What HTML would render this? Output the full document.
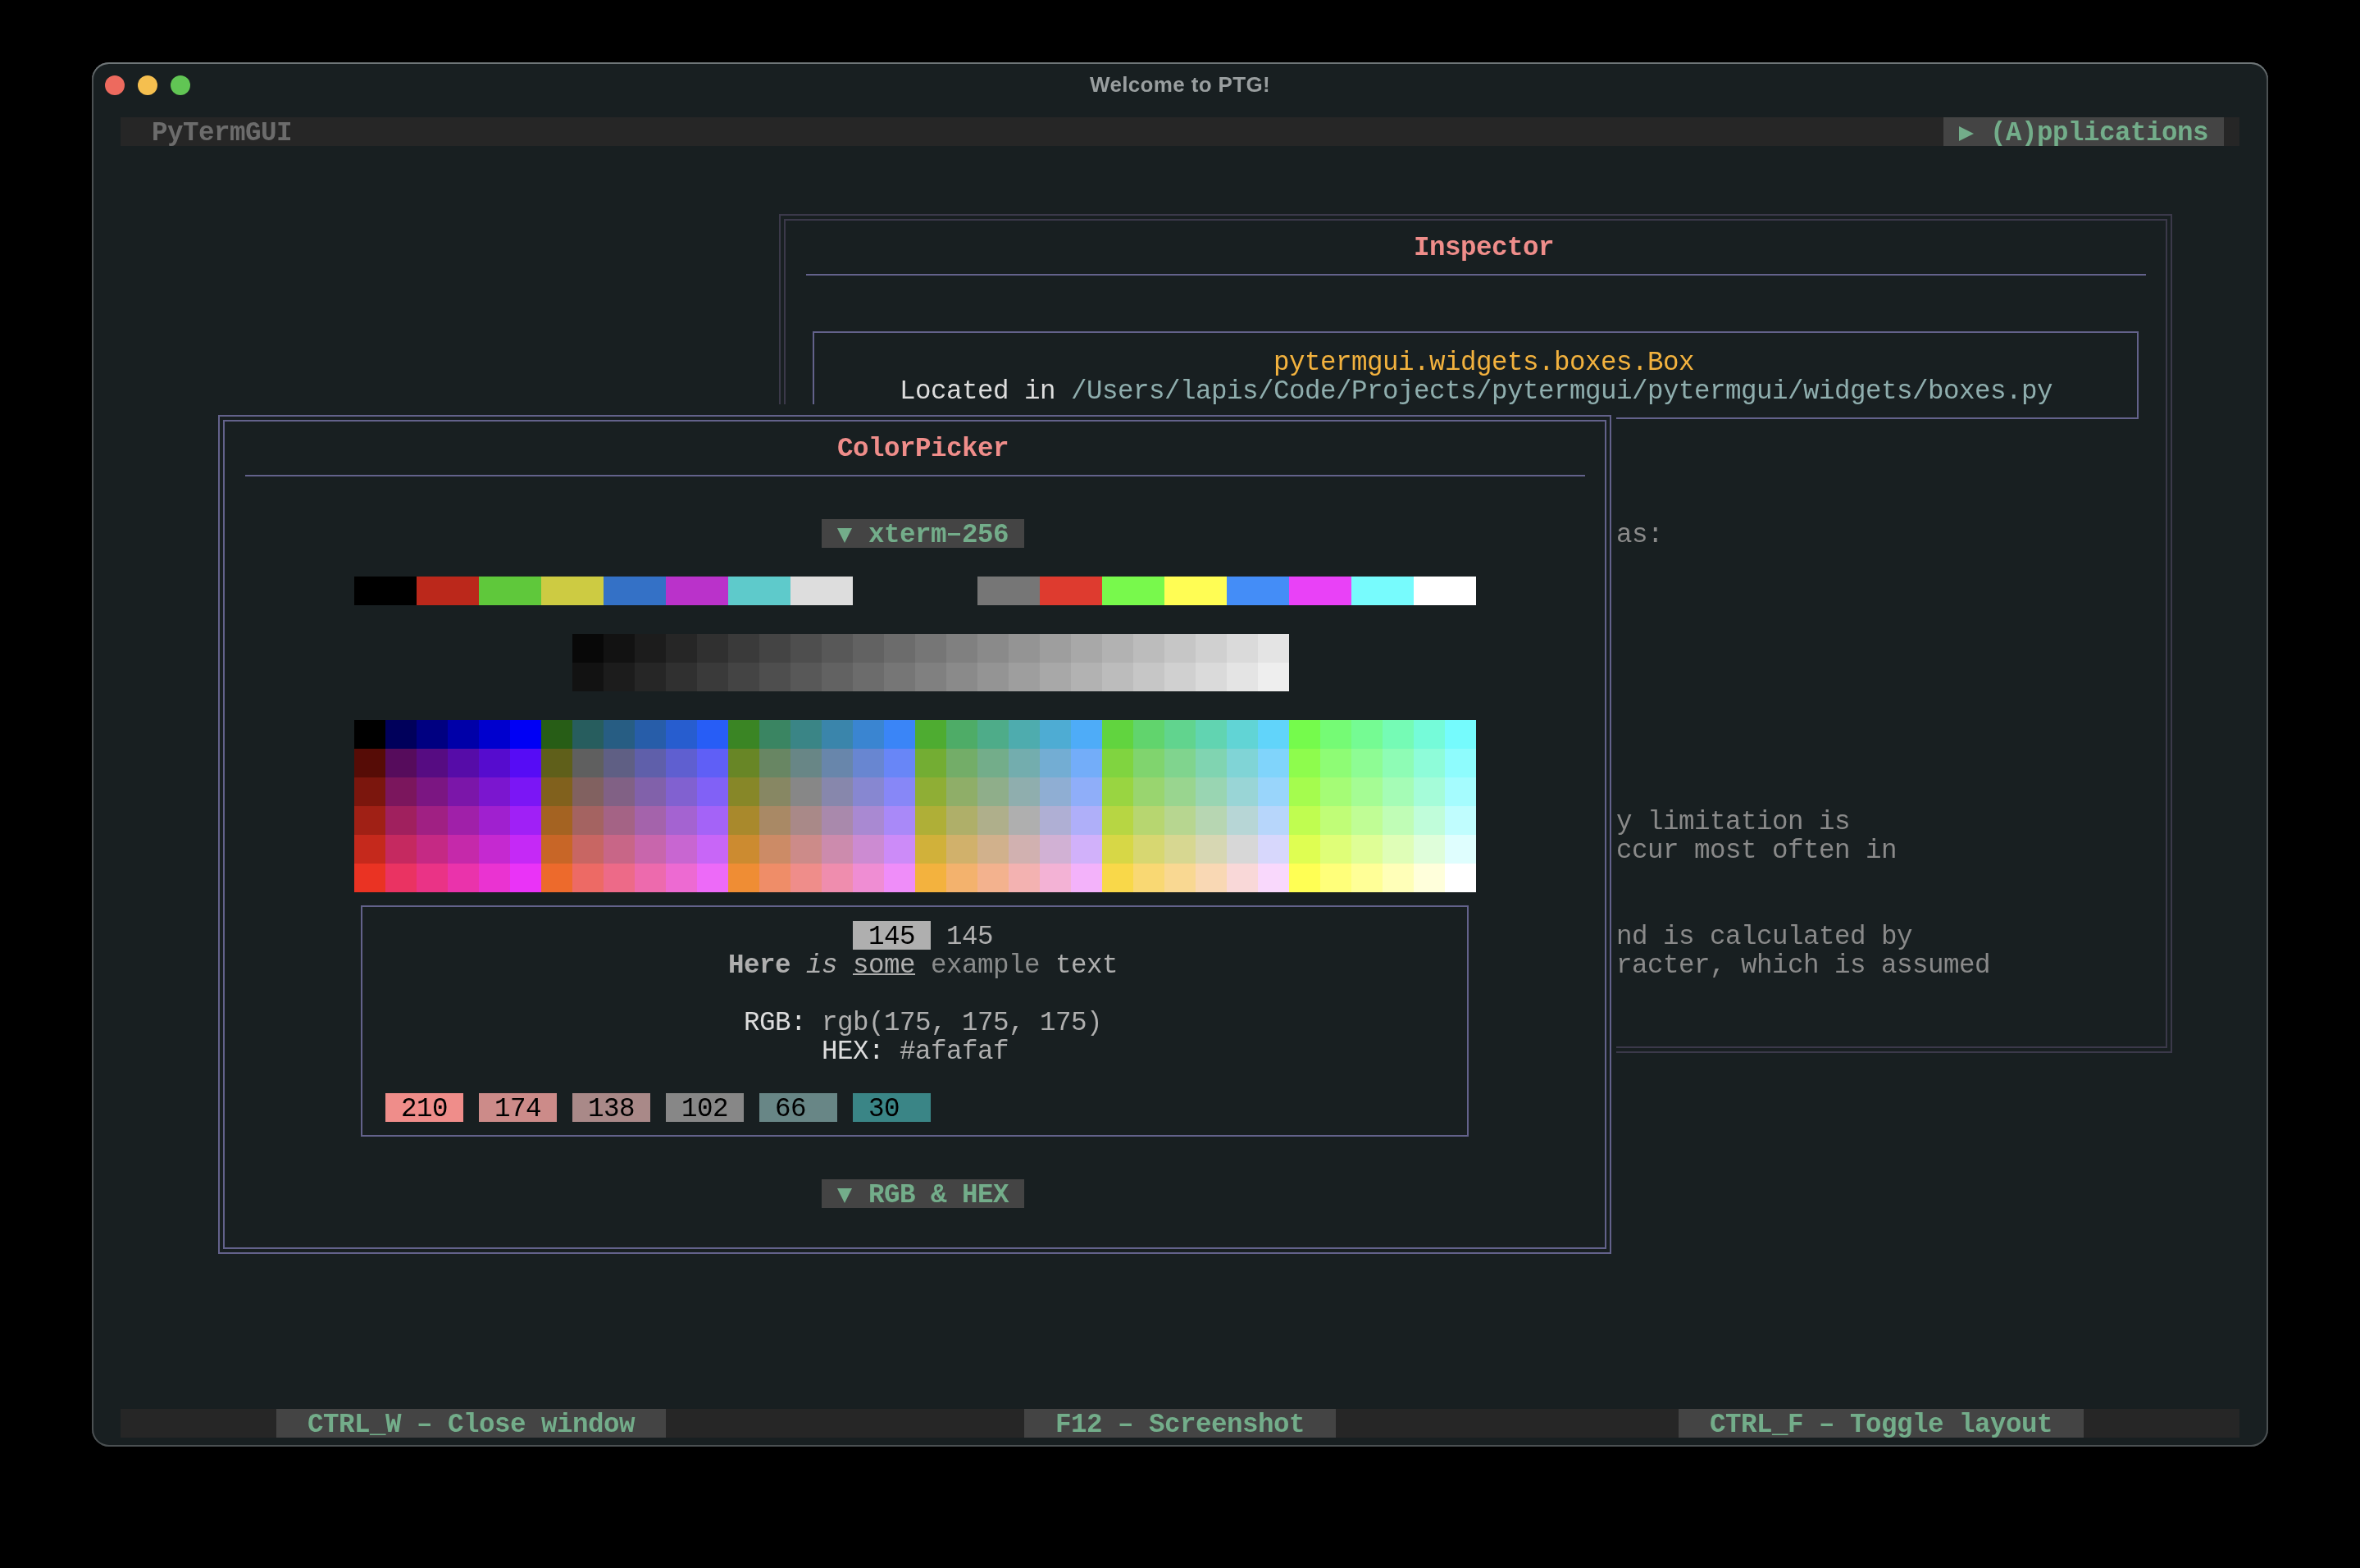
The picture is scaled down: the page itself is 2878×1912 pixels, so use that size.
<!DOCTYPE html>
<html><head><meta charset="utf-8"><title>Welcome to PTG!</title>
<style>
html,body{margin:0;padding:0;background:#000;}
body{width:2878px;height:1912px;position:relative;overflow:hidden;font-family:"Liberation Mono",monospace;}
.win{position:absolute;left:112px;top:76px;width:2654px;height:1688px;background:#181f21;border-radius:21px;box-shadow:inset 0 2px 0 0 #6f7678, inset 0 0 0 2px #4b5052;}
.title{position:absolute;left:112px;top:76px;width:2654px;letter-spacing:0.35px;height:56px;line-height:54px;text-align:center;color:#999e9f;font-family:"Liberation Sans",sans-serif;font-weight:bold;font-size:26px;}
.dot{position:absolute;top:92px;width:24px;height:24px;border-radius:50%;}
.r{position:absolute;box-sizing:content-box;}
.t{position:absolute;height:35px;line-height:35px;font-size:32.5px;letter-spacing:-0.503px;margin-top:2px;white-space:pre;}
.b{font-weight:bold;} .i{font-style:italic;} .u{text-decoration:underline;text-decoration-thickness:2px;text-underline-offset:1px;text-decoration-skip-ink:none;}
</style></head><body>
<div id="term" style="position:absolute;left:0;top:0;width:2878px;height:1912px;will-change:transform;">
<div class="win"></div>
<div class="title">Welcome to PTG!</div>
<div class="dot" style="left:128px;background:#ed6a5e"></div>
<div class="dot" style="left:168px;background:#f5bf4f"></div>
<div class="dot" style="left:208px;background:#61c554"></div>
<div class="r" style="left:147px;top:143px;width:2584px;height:35px;background:#262626;"></div>
<span class="t b" style="left:185px;top:143px;color:#6c6c6c">PyTermGUI</span>
<div class="r" style="left:2370px;top:143px;width:342px;height:35px;background:#444444;"></div>
<div class="r" style="left:2389px;top:154px;width:18px;height:18px;background:#73ad8a;clip-path:polygon(0 0,100% 50%,0 100%)"></div>
<span class="t b" style="left:2427px;top:143px;color:#73ad8a">(A)pplications</span>
<div class="r" style="left:147px;top:1718px;width:2584px;height:35px;background:#262626;"></div>
<div class="r" style="left:337px;top:1718px;width:475px;height:35px;background:#444444;"></div>
<span class="t b" style="left:337px;top:1718px;color:#73ad8a">  CTRL_W – Close window  </span>
<div class="r" style="left:1249px;top:1718px;width:380px;height:35px;background:#444444;"></div>
<span class="t b" style="left:1249px;top:1718px;color:#73ad8a">  F12 – Screenshot  </span>
<div class="r" style="left:2047px;top:1718px;width:494px;height:35px;background:#444444;"></div>
<span class="t b" style="left:2047px;top:1718px;color:#73ad8a">  CTRL_F – Toggle layout  </span>
<div class="r" style="left:950px;top:261px;width:1695px;height:1019px;border:2px solid #3b394a"></div>
<div class="r" style="left:956px;top:267px;width:1683px;height:1007px;border:2px solid #3b394a"></div>
<span class="t b" style="left:1724px;top:283px;color:#ef8d8a">Inspector</span>
<div class="r" style="left:983px;top:334px;width:1634px;height:2px;background:#63628b;"></div>
<div class="r" style="left:991px;top:404px;width:1613px;height:103px;border:2px solid #63628b"></div>
<span class="t " style="left:1553px;top:423px;color:#f3b23e">pytermgui.widgets.boxes.Box</span>
<span class="t " style="left:1097px;top:458px;color:#dddddd">Located in</span>
<span class="t " style="left:1306px;top:458px;color:#8faeae">/Users/lapis/Code/Projects/pytermgui/pytermgui/widgets/boxes.py</span>
<span class="t " style="left:1971px;top:633px;color:#8a8a8a">as:</span>
<span class="t " style="left:1971px;top:983px;color:#8a8a8a">y limitation is</span>
<span class="t " style="left:1971px;top:1018px;color:#8a8a8a">ccur most often in</span>
<span class="t " style="left:1971px;top:1123px;color:#8a8a8a">nd is calculated by</span>
<span class="t " style="left:1971px;top:1158px;color:#8a8a8a">racter, which is assumed</span>
<div class="r" style="left:261px;top:493px;width:1710px;height:1050px;background:#181f21;"></div>
<div class="r" style="left:266px;top:506px;width:1695px;height:1019px;border:2px solid #63628b"></div>
<div class="r" style="left:272px;top:512px;width:1683px;height:1007px;border:2px solid #63628b"></div>
<span class="t b" style="left:1021px;top:528px;color:#ef8d8a">ColorPicker</span>
<div class="r" style="left:299px;top:579px;width:1634px;height:2px;background:#63628b;"></div>
<div class="r" style="left:1002px;top:633px;width:247px;height:35px;background:#444444;"></div>
<div class="r" style="left:1021px;top:644px;width:18px;height:18px;background:#73ad8a;clip-path:polygon(0 0,100% 0,50% 100%)"></div>
<span class="t b" style="left:1059px;top:633px;color:#73ad8a">xterm 256</span>
<div class="r" style="left:1156px;top:650px;width:15px;height:3px;background:#73ad8a;"></div>
<div class="r" style="left:432px;top:703px;width:76px;height:35px;background:#000000;"></div>
<div class="r" style="left:1192px;top:703px;width:76px;height:35px;background:#767676;"></div>
<div class="r" style="left:508px;top:703px;width:76px;height:35px;background:#bb281b;"></div>
<div class="r" style="left:1268px;top:703px;width:76px;height:35px;background:#de3b2f;"></div>
<div class="r" style="left:584px;top:703px;width:76px;height:35px;background:#5fc83b;"></div>
<div class="r" style="left:1344px;top:703px;width:76px;height:35px;background:#78f94c;"></div>
<div class="r" style="left:660px;top:703px;width:76px;height:35px;background:#cdcb42;"></div>
<div class="r" style="left:1420px;top:703px;width:76px;height:35px;background:#fffd54;"></div>
<div class="r" style="left:736px;top:703px;width:76px;height:35px;background:#3471c6;"></div>
<div class="r" style="left:1496px;top:703px;width:76px;height:35px;background:#448df7;"></div>
<div class="r" style="left:812px;top:703px;width:76px;height:35px;background:#ba32ca;"></div>
<div class="r" style="left:1572px;top:703px;width:76px;height:35px;background:#e941f7;"></div>
<div class="r" style="left:888px;top:703px;width:76px;height:35px;background:#5ecacb;"></div>
<div class="r" style="left:1648px;top:703px;width:76px;height:35px;background:#77fbfd;"></div>
<div class="r" style="left:964px;top:703px;width:76px;height:35px;background:#dddddd;"></div>
<div class="r" style="left:1724px;top:703px;width:76px;height:35px;background:#ffffff;"></div>
<div class="r" style="left:698px;top:773px;width:38px;height:35px;background:#080808;"></div>
<div class="r" style="left:698px;top:808px;width:38px;height:35px;background:#121212;"></div>
<div class="r" style="left:736px;top:773px;width:38px;height:35px;background:#121212;"></div>
<div class="r" style="left:736px;top:808px;width:38px;height:35px;background:#1c1c1c;"></div>
<div class="r" style="left:774px;top:773px;width:38px;height:35px;background:#1c1c1c;"></div>
<div class="r" style="left:774px;top:808px;width:38px;height:35px;background:#262626;"></div>
<div class="r" style="left:812px;top:773px;width:38px;height:35px;background:#262626;"></div>
<div class="r" style="left:812px;top:808px;width:38px;height:35px;background:#303030;"></div>
<div class="r" style="left:850px;top:773px;width:38px;height:35px;background:#303030;"></div>
<div class="r" style="left:850px;top:808px;width:38px;height:35px;background:#3a3a3a;"></div>
<div class="r" style="left:888px;top:773px;width:38px;height:35px;background:#3a3a3a;"></div>
<div class="r" style="left:888px;top:808px;width:38px;height:35px;background:#444444;"></div>
<div class="r" style="left:926px;top:773px;width:38px;height:35px;background:#444444;"></div>
<div class="r" style="left:926px;top:808px;width:38px;height:35px;background:#4e4e4e;"></div>
<div class="r" style="left:964px;top:773px;width:38px;height:35px;background:#4e4e4e;"></div>
<div class="r" style="left:964px;top:808px;width:38px;height:35px;background:#585858;"></div>
<div class="r" style="left:1002px;top:773px;width:38px;height:35px;background:#585858;"></div>
<div class="r" style="left:1002px;top:808px;width:38px;height:35px;background:#626262;"></div>
<div class="r" style="left:1040px;top:773px;width:38px;height:35px;background:#626262;"></div>
<div class="r" style="left:1040px;top:808px;width:38px;height:35px;background:#6c6c6c;"></div>
<div class="r" style="left:1078px;top:773px;width:38px;height:35px;background:#6c6c6c;"></div>
<div class="r" style="left:1078px;top:808px;width:38px;height:35px;background:#767676;"></div>
<div class="r" style="left:1116px;top:773px;width:38px;height:35px;background:#767676;"></div>
<div class="r" style="left:1116px;top:808px;width:38px;height:35px;background:#808080;"></div>
<div class="r" style="left:1154px;top:773px;width:38px;height:35px;background:#808080;"></div>
<div class="r" style="left:1154px;top:808px;width:38px;height:35px;background:#8a8a8a;"></div>
<div class="r" style="left:1192px;top:773px;width:38px;height:35px;background:#8a8a8a;"></div>
<div class="r" style="left:1192px;top:808px;width:38px;height:35px;background:#949494;"></div>
<div class="r" style="left:1230px;top:773px;width:38px;height:35px;background:#949494;"></div>
<div class="r" style="left:1230px;top:808px;width:38px;height:35px;background:#9e9e9e;"></div>
<div class="r" style="left:1268px;top:773px;width:38px;height:35px;background:#9e9e9e;"></div>
<div class="r" style="left:1268px;top:808px;width:38px;height:35px;background:#a8a8a8;"></div>
<div class="r" style="left:1306px;top:773px;width:38px;height:35px;background:#a8a8a8;"></div>
<div class="r" style="left:1306px;top:808px;width:38px;height:35px;background:#b2b2b2;"></div>
<div class="r" style="left:1344px;top:773px;width:38px;height:35px;background:#b2b2b2;"></div>
<div class="r" style="left:1344px;top:808px;width:38px;height:35px;background:#bcbcbc;"></div>
<div class="r" style="left:1382px;top:773px;width:38px;height:35px;background:#bcbcbc;"></div>
<div class="r" style="left:1382px;top:808px;width:38px;height:35px;background:#c6c6c6;"></div>
<div class="r" style="left:1420px;top:773px;width:38px;height:35px;background:#c6c6c6;"></div>
<div class="r" style="left:1420px;top:808px;width:38px;height:35px;background:#d0d0d0;"></div>
<div class="r" style="left:1458px;top:773px;width:38px;height:35px;background:#d0d0d0;"></div>
<div class="r" style="left:1458px;top:808px;width:38px;height:35px;background:#dadada;"></div>
<div class="r" style="left:1496px;top:773px;width:38px;height:35px;background:#dadada;"></div>
<div class="r" style="left:1496px;top:808px;width:38px;height:35px;background:#e4e4e4;"></div>
<div class="r" style="left:1534px;top:773px;width:38px;height:35px;background:#e4e4e4;"></div>
<div class="r" style="left:1534px;top:808px;width:38px;height:35px;background:#eeeeee;"></div>
<div class="r" style="left:432px;top:878px;width:38px;height:35px;background:#000000;"></div>
<div class="r" style="left:470px;top:878px;width:38px;height:35px;background:#00005b;"></div>
<div class="r" style="left:508px;top:878px;width:38px;height:35px;background:#000081;"></div>
<div class="r" style="left:546px;top:878px;width:38px;height:35px;background:#0000a8;"></div>
<div class="r" style="left:584px;top:878px;width:38px;height:35px;background:#0000ce;"></div>
<div class="r" style="left:622px;top:878px;width:38px;height:35px;background:#0000f5;"></div>
<div class="r" style="left:660px;top:878px;width:38px;height:35px;background:#275d16;"></div>
<div class="r" style="left:698px;top:878px;width:38px;height:35px;background:#275d5e;"></div>
<div class="r" style="left:736px;top:878px;width:38px;height:35px;background:#275d83;"></div>
<div class="r" style="left:774px;top:878px;width:38px;height:35px;background:#275da9;"></div>
<div class="r" style="left:812px;top:878px;width:38px;height:35px;background:#275dcf;"></div>
<div class="r" style="left:850px;top:878px;width:38px;height:35px;background:#275df6;"></div>
<div class="r" style="left:888px;top:878px;width:38px;height:35px;background:#3a8524;"></div>
<div class="r" style="left:926px;top:878px;width:38px;height:35px;background:#3a8562;"></div>
<div class="r" style="left:964px;top:878px;width:38px;height:35px;background:#3a8586;"></div>
<div class="r" style="left:1002px;top:878px;width:38px;height:35px;background:#3a85ab;"></div>
<div class="r" style="left:1040px;top:878px;width:38px;height:35px;background:#3a85d1;"></div>
<div class="r" style="left:1078px;top:878px;width:38px;height:35px;background:#3a85f7;"></div>
<div class="r" style="left:1116px;top:878px;width:38px;height:35px;background:#4eac31;"></div>
<div class="r" style="left:1154px;top:878px;width:38px;height:35px;background:#4eac67;"></div>
<div class="r" style="left:1192px;top:878px;width:38px;height:35px;background:#4eac89;"></div>
<div class="r" style="left:1230px;top:878px;width:38px;height:35px;background:#4eacae;"></div>
<div class="r" style="left:1268px;top:878px;width:38px;height:35px;background:#4eacd3;"></div>
<div class="r" style="left:1306px;top:878px;width:38px;height:35px;background:#4eacf8;"></div>
<div class="r" style="left:1344px;top:878px;width:38px;height:35px;background:#61d43f;"></div>
<div class="r" style="left:1382px;top:878px;width:38px;height:35px;background:#61d46d;"></div>
<div class="r" style="left:1420px;top:878px;width:38px;height:35px;background:#61d48e;"></div>
<div class="r" style="left:1458px;top:878px;width:38px;height:35px;background:#61d4b1;"></div>
<div class="r" style="left:1496px;top:878px;width:38px;height:35px;background:#61d4d5;"></div>
<div class="r" style="left:1534px;top:878px;width:38px;height:35px;background:#61d4fa;"></div>
<div class="r" style="left:1572px;top:878px;width:38px;height:35px;background:#75fb4c;"></div>
<div class="r" style="left:1610px;top:878px;width:38px;height:35px;background:#75fb75;"></div>
<div class="r" style="left:1648px;top:878px;width:38px;height:35px;background:#75fb93;"></div>
<div class="r" style="left:1686px;top:878px;width:38px;height:35px;background:#75fbb5;"></div>
<div class="r" style="left:1724px;top:878px;width:38px;height:35px;background:#75fbd9;"></div>
<div class="r" style="left:1762px;top:878px;width:38px;height:35px;background:#75fbfd;"></div>
<div class="r" style="left:432px;top:913px;width:38px;height:35px;background:#560c06;"></div>
<div class="r" style="left:470px;top:913px;width:38px;height:35px;background:#560c5c;"></div>
<div class="r" style="left:508px;top:913px;width:38px;height:35px;background:#560c82;"></div>
<div class="r" style="left:546px;top:913px;width:38px;height:35px;background:#560ca8;"></div>
<div class="r" style="left:584px;top:913px;width:38px;height:35px;background:#560cce;"></div>
<div class="r" style="left:622px;top:913px;width:38px;height:35px;background:#560cf5;"></div>
<div class="r" style="left:660px;top:913px;width:38px;height:35px;background:#5f5f1a;"></div>
<div class="r" style="left:698px;top:913px;width:38px;height:35px;background:#5f5f5f;"></div>
<div class="r" style="left:736px;top:913px;width:38px;height:35px;background:#5f5f84;"></div>
<div class="r" style="left:774px;top:913px;width:38px;height:35px;background:#5f5faa;"></div>
<div class="r" style="left:812px;top:913px;width:38px;height:35px;background:#5f5fd0;"></div>
<div class="r" style="left:850px;top:913px;width:38px;height:35px;background:#5f5ff6;"></div>
<div class="r" style="left:888px;top:913px;width:38px;height:35px;background:#688626;"></div>
<div class="r" style="left:926px;top:913px;width:38px;height:35px;background:#688663;"></div>
<div class="r" style="left:964px;top:913px;width:38px;height:35px;background:#688686;"></div>
<div class="r" style="left:1002px;top:913px;width:38px;height:35px;background:#6886ab;"></div>
<div class="r" style="left:1040px;top:913px;width:38px;height:35px;background:#6886d1;"></div>
<div class="r" style="left:1078px;top:913px;width:38px;height:35px;background:#6886f7;"></div>
<div class="r" style="left:1116px;top:913px;width:38px;height:35px;background:#73ad33;"></div>
<div class="r" style="left:1154px;top:913px;width:38px;height:35px;background:#73ad68;"></div>
<div class="r" style="left:1192px;top:913px;width:38px;height:35px;background:#73ad8a;"></div>
<div class="r" style="left:1230px;top:913px;width:38px;height:35px;background:#73adae;"></div>
<div class="r" style="left:1268px;top:913px;width:38px;height:35px;background:#73add3;"></div>
<div class="r" style="left:1306px;top:913px;width:38px;height:35px;background:#73adf9;"></div>
<div class="r" style="left:1344px;top:913px;width:38px;height:35px;background:#80d440;"></div>
<div class="r" style="left:1382px;top:913px;width:38px;height:35px;background:#80d46e;"></div>
<div class="r" style="left:1420px;top:913px;width:38px;height:35px;background:#80d48e;"></div>
<div class="r" style="left:1458px;top:913px;width:38px;height:35px;background:#80d4b1;"></div>
<div class="r" style="left:1496px;top:913px;width:38px;height:35px;background:#80d4d6;"></div>
<div class="r" style="left:1534px;top:913px;width:38px;height:35px;background:#80d4fb;"></div>
<div class="r" style="left:1572px;top:913px;width:38px;height:35px;background:#8efc4d;"></div>
<div class="r" style="left:1610px;top:913px;width:38px;height:35px;background:#8efc75;"></div>
<div class="r" style="left:1648px;top:913px;width:38px;height:35px;background:#8efc94;"></div>
<div class="r" style="left:1686px;top:913px;width:38px;height:35px;background:#8efcb5;"></div>
<div class="r" style="left:1724px;top:913px;width:38px;height:35px;background:#8efcd9;"></div>
<div class="r" style="left:1762px;top:913px;width:38px;height:35px;background:#8efcfd;"></div>
<div class="r" style="left:432px;top:948px;width:38px;height:35px;background:#7b160d;"></div>
<div class="r" style="left:470px;top:948px;width:38px;height:35px;background:#7b165d;"></div>
<div class="r" style="left:508px;top:948px;width:38px;height:35px;background:#7b1682;"></div>
<div class="r" style="left:546px;top:948px;width:38px;height:35px;background:#7b16a9;"></div>
<div class="r" style="left:584px;top:948px;width:38px;height:35px;background:#7b16cf;"></div>
<div class="r" style="left:622px;top:948px;width:38px;height:35px;background:#7b16f5;"></div>
<div class="r" style="left:660px;top:948px;width:38px;height:35px;background:#81611d;"></div>
<div class="r" style="left:698px;top:948px;width:38px;height:35px;background:#816160;"></div>
<div class="r" style="left:736px;top:948px;width:38px;height:35px;background:#816185;"></div>
<div class="r" style="left:774px;top:948px;width:38px;height:35px;background:#8161aa;"></div>
<div class="r" style="left:812px;top:948px;width:38px;height:35px;background:#8161d0;"></div>
<div class="r" style="left:850px;top:948px;width:38px;height:35px;background:#8161f6;"></div>
<div class="r" style="left:888px;top:948px;width:38px;height:35px;background:#878728;"></div>
<div class="r" style="left:926px;top:948px;width:38px;height:35px;background:#878763;"></div>
<div class="r" style="left:964px;top:948px;width:38px;height:35px;background:#878787;"></div>
<div class="r" style="left:1002px;top:948px;width:38px;height:35px;background:#8787ac;"></div>
<div class="r" style="left:1040px;top:948px;width:38px;height:35px;background:#8787d1;"></div>
<div class="r" style="left:1078px;top:948px;width:38px;height:35px;background:#8787f7;"></div>
<div class="r" style="left:1116px;top:948px;width:38px;height:35px;background:#8fae35;"></div>
<div class="r" style="left:1154px;top:948px;width:38px;height:35px;background:#8fae68;"></div>
<div class="r" style="left:1192px;top:948px;width:38px;height:35px;background:#8fae8a;"></div>
<div class="r" style="left:1230px;top:948px;width:38px;height:35px;background:#8faeae;"></div>
<div class="r" style="left:1268px;top:948px;width:38px;height:35px;background:#8faed3;"></div>
<div class="r" style="left:1306px;top:948px;width:38px;height:35px;background:#8faef9;"></div>
<div class="r" style="left:1344px;top:948px;width:38px;height:35px;background:#99d541;"></div>
<div class="r" style="left:1382px;top:948px;width:38px;height:35px;background:#99d56f;"></div>
<div class="r" style="left:1420px;top:948px;width:38px;height:35px;background:#99d58f;"></div>
<div class="r" style="left:1458px;top:948px;width:38px;height:35px;background:#99d5b2;"></div>
<div class="r" style="left:1496px;top:948px;width:38px;height:35px;background:#99d5d6;"></div>
<div class="r" style="left:1534px;top:948px;width:38px;height:35px;background:#99d5fb;"></div>
<div class="r" style="left:1572px;top:948px;width:38px;height:35px;background:#a5fc4e;"></div>
<div class="r" style="left:1610px;top:948px;width:38px;height:35px;background:#a5fc76;"></div>
<div class="r" style="left:1648px;top:948px;width:38px;height:35px;background:#a5fc94;"></div>
<div class="r" style="left:1686px;top:948px;width:38px;height:35px;background:#a5fcb6;"></div>
<div class="r" style="left:1724px;top:948px;width:38px;height:35px;background:#a5fcd9;"></div>
<div class="r" style="left:1762px;top:948px;width:38px;height:35px;background:#a5fcfe;"></div>
<div class="r" style="left:432px;top:983px;width:38px;height:35px;background:#a02015;"></div>
<div class="r" style="left:470px;top:983px;width:38px;height:35px;background:#a0205e;"></div>
<div class="r" style="left:508px;top:983px;width:38px;height:35px;background:#a02083;"></div>
<div class="r" style="left:546px;top:983px;width:38px;height:35px;background:#a020a9;"></div>
<div class="r" style="left:584px;top:983px;width:38px;height:35px;background:#a020cf;"></div>
<div class="r" style="left:622px;top:983px;width:38px;height:35px;background:#a020f6;"></div>
<div class="r" style="left:660px;top:983px;width:38px;height:35px;background:#a46322;"></div>
<div class="r" style="left:698px;top:983px;width:38px;height:35px;background:#a46361;"></div>
<div class="r" style="left:736px;top:983px;width:38px;height:35px;background:#a46385;"></div>
<div class="r" style="left:774px;top:983px;width:38px;height:35px;background:#a463ab;"></div>
<div class="r" style="left:812px;top:983px;width:38px;height:35px;background:#a463d1;"></div>
<div class="r" style="left:850px;top:983px;width:38px;height:35px;background:#a463f7;"></div>
<div class="r" style="left:888px;top:983px;width:38px;height:35px;background:#a9892c;"></div>
<div class="r" style="left:926px;top:983px;width:38px;height:35px;background:#a98965;"></div>
<div class="r" style="left:964px;top:983px;width:38px;height:35px;background:#a98988;"></div>
<div class="r" style="left:1002px;top:983px;width:38px;height:35px;background:#a989ac;"></div>
<div class="r" style="left:1040px;top:983px;width:38px;height:35px;background:#a989d2;"></div>
<div class="r" style="left:1078px;top:983px;width:38px;height:35px;background:#a989f8;"></div>
<div class="r" style="left:1116px;top:983px;width:38px;height:35px;background:#afaf37;"></div>
<div class="r" style="left:1154px;top:983px;width:38px;height:35px;background:#afaf69;"></div>
<div class="r" style="left:1192px;top:983px;width:38px;height:35px;background:#afaf8b;"></div>
<div class="r" style="left:1230px;top:983px;width:38px;height:35px;background:#afafaf;"></div>
<div class="r" style="left:1268px;top:983px;width:38px;height:35px;background:#afafd4;"></div>
<div class="r" style="left:1306px;top:983px;width:38px;height:35px;background:#afaff9;"></div>
<div class="r" style="left:1344px;top:983px;width:38px;height:35px;background:#b7d643;"></div>
<div class="r" style="left:1382px;top:983px;width:38px;height:35px;background:#b7d670;"></div>
<div class="r" style="left:1420px;top:983px;width:38px;height:35px;background:#b7d690;"></div>
<div class="r" style="left:1458px;top:983px;width:38px;height:35px;background:#b7d6b2;"></div>
<div class="r" style="left:1496px;top:983px;width:38px;height:35px;background:#b7d6d6;"></div>
<div class="r" style="left:1534px;top:983px;width:38px;height:35px;background:#b7d6fb;"></div>
<div class="r" style="left:1572px;top:983px;width:38px;height:35px;background:#c0fd50;"></div>
<div class="r" style="left:1610px;top:983px;width:38px;height:35px;background:#c0fd77;"></div>
<div class="r" style="left:1648px;top:983px;width:38px;height:35px;background:#c0fd95;"></div>
<div class="r" style="left:1686px;top:983px;width:38px;height:35px;background:#c0fdb6;"></div>
<div class="r" style="left:1724px;top:983px;width:38px;height:35px;background:#c0fdda;"></div>
<div class="r" style="left:1762px;top:983px;width:38px;height:35px;background:#c0fdfe;"></div>
<div class="r" style="left:432px;top:1018px;width:38px;height:35px;background:#c5291c;"></div>
<div class="r" style="left:470px;top:1018px;width:38px;height:35px;background:#c52960;"></div>
<div class="r" style="left:508px;top:1018px;width:38px;height:35px;background:#c52984;"></div>
<div class="r" style="left:546px;top:1018px;width:38px;height:35px;background:#c529aa;"></div>
<div class="r" style="left:584px;top:1018px;width:38px;height:35px;background:#c529d0;"></div>
<div class="r" style="left:622px;top:1018px;width:38px;height:35px;background:#c529f6;"></div>
<div class="r" style="left:660px;top:1018px;width:38px;height:35px;background:#c86627;"></div>
<div class="r" style="left:698px;top:1018px;width:38px;height:35px;background:#c86663;"></div>
<div class="r" style="left:736px;top:1018px;width:38px;height:35px;background:#c86687;"></div>
<div class="r" style="left:774px;top:1018px;width:38px;height:35px;background:#c866ac;"></div>
<div class="r" style="left:812px;top:1018px;width:38px;height:35px;background:#c866d1;"></div>
<div class="r" style="left:850px;top:1018px;width:38px;height:35px;background:#c866f7;"></div>
<div class="r" style="left:888px;top:1018px;width:38px;height:35px;background:#cc8b30;"></div>
<div class="r" style="left:926px;top:1018px;width:38px;height:35px;background:#cc8b66;"></div>
<div class="r" style="left:964px;top:1018px;width:38px;height:35px;background:#cc8b89;"></div>
<div class="r" style="left:1002px;top:1018px;width:38px;height:35px;background:#cc8bad;"></div>
<div class="r" style="left:1040px;top:1018px;width:38px;height:35px;background:#cc8bd2;"></div>
<div class="r" style="left:1078px;top:1018px;width:38px;height:35px;background:#cc8bf8;"></div>
<div class="r" style="left:1116px;top:1018px;width:38px;height:35px;background:#d1b13a;"></div>
<div class="r" style="left:1154px;top:1018px;width:38px;height:35px;background:#d1b16b;"></div>
<div class="r" style="left:1192px;top:1018px;width:38px;height:35px;background:#d1b18c;"></div>
<div class="r" style="left:1230px;top:1018px;width:38px;height:35px;background:#d1b1b0;"></div>
<div class="r" style="left:1268px;top:1018px;width:38px;height:35px;background:#d1b1d4;"></div>
<div class="r" style="left:1306px;top:1018px;width:38px;height:35px;background:#d1b1fa;"></div>
<div class="r" style="left:1344px;top:1018px;width:38px;height:35px;background:#d7d746;"></div>
<div class="r" style="left:1382px;top:1018px;width:38px;height:35px;background:#d7d771;"></div>
<div class="r" style="left:1420px;top:1018px;width:38px;height:35px;background:#d7d791;"></div>
<div class="r" style="left:1458px;top:1018px;width:38px;height:35px;background:#d7d7b3;"></div>
<div class="r" style="left:1496px;top:1018px;width:38px;height:35px;background:#d7d7d7;"></div>
<div class="r" style="left:1534px;top:1018px;width:38px;height:35px;background:#d7d7fc;"></div>
<div class="r" style="left:1572px;top:1018px;width:38px;height:35px;background:#dffe52;"></div>
<div class="r" style="left:1610px;top:1018px;width:38px;height:35px;background:#dffe78;"></div>
<div class="r" style="left:1648px;top:1018px;width:38px;height:35px;background:#dffe96;"></div>
<div class="r" style="left:1686px;top:1018px;width:38px;height:35px;background:#dffeb7;"></div>
<div class="r" style="left:1724px;top:1018px;width:38px;height:35px;background:#dffeda;"></div>
<div class="r" style="left:1762px;top:1018px;width:38px;height:35px;background:#dffefe;"></div>
<div class="r" style="left:432px;top:1053px;width:38px;height:35px;background:#ea3323;"></div>
<div class="r" style="left:470px;top:1053px;width:38px;height:35px;background:#ea3362;"></div>
<div class="r" style="left:508px;top:1053px;width:38px;height:35px;background:#ea3386;"></div>
<div class="r" style="left:546px;top:1053px;width:38px;height:35px;background:#ea33ab;"></div>
<div class="r" style="left:584px;top:1053px;width:38px;height:35px;background:#ea33d1;"></div>
<div class="r" style="left:622px;top:1053px;width:38px;height:35px;background:#ea33f7;"></div>
<div class="r" style="left:660px;top:1053px;width:38px;height:35px;background:#ed6a2c;"></div>
<div class="r" style="left:698px;top:1053px;width:38px;height:35px;background:#ed6a65;"></div>
<div class="r" style="left:736px;top:1053px;width:38px;height:35px;background:#ed6a88;"></div>
<div class="r" style="left:774px;top:1053px;width:38px;height:35px;background:#ed6aad;"></div>
<div class="r" style="left:812px;top:1053px;width:38px;height:35px;background:#ed6ad2;"></div>
<div class="r" style="left:850px;top:1053px;width:38px;height:35px;background:#ed6af8;"></div>
<div class="r" style="left:888px;top:1053px;width:38px;height:35px;background:#ef8d34;"></div>
<div class="r" style="left:926px;top:1053px;width:38px;height:35px;background:#ef8d68;"></div>
<div class="r" style="left:964px;top:1053px;width:38px;height:35px;background:#ef8d8a;"></div>
<div class="r" style="left:1002px;top:1053px;width:38px;height:35px;background:#ef8dae;"></div>
<div class="r" style="left:1040px;top:1053px;width:38px;height:35px;background:#ef8dd3;"></div>
<div class="r" style="left:1078px;top:1053px;width:38px;height:35px;background:#ef8df9;"></div>
<div class="r" style="left:1116px;top:1053px;width:38px;height:35px;background:#f3b23e;"></div>
<div class="r" style="left:1154px;top:1053px;width:38px;height:35px;background:#f3b26d;"></div>
<div class="r" style="left:1192px;top:1053px;width:38px;height:35px;background:#f3b28e;"></div>
<div class="r" style="left:1230px;top:1053px;width:38px;height:35px;background:#f3b2b1;"></div>
<div class="r" style="left:1268px;top:1053px;width:38px;height:35px;background:#f3b2d5;"></div>
<div class="r" style="left:1306px;top:1053px;width:38px;height:35px;background:#f3b2fa;"></div>
<div class="r" style="left:1344px;top:1053px;width:38px;height:35px;background:#f9d849;"></div>
<div class="r" style="left:1382px;top:1053px;width:38px;height:35px;background:#f9d873;"></div>
<div class="r" style="left:1420px;top:1053px;width:38px;height:35px;background:#f9d892;"></div>
<div class="r" style="left:1458px;top:1053px;width:38px;height:35px;background:#f9d8b4;"></div>
<div class="r" style="left:1496px;top:1053px;width:38px;height:35px;background:#f9d8d8;"></div>
<div class="r" style="left:1534px;top:1053px;width:38px;height:35px;background:#f9d8fc;"></div>
<div class="r" style="left:1572px;top:1053px;width:38px;height:35px;background:#ffff54;"></div>
<div class="r" style="left:1610px;top:1053px;width:38px;height:35px;background:#ffff7a;"></div>
<div class="r" style="left:1648px;top:1053px;width:38px;height:35px;background:#ffff97;"></div>
<div class="r" style="left:1686px;top:1053px;width:38px;height:35px;background:#ffffb8;"></div>
<div class="r" style="left:1724px;top:1053px;width:38px;height:35px;background:#ffffdb;"></div>
<div class="r" style="left:1762px;top:1053px;width:38px;height:35px;background:#ffffff;"></div>
<div class="r" style="left:440px;top:1104px;width:1347px;height:278px;border:2px solid #63628b"></div>
<div class="r" style="left:1040px;top:1123px;width:95px;height:35px;background:#afafaf;"></div>
<span class="t " style="left:1040px;top:1123px;color:#000000"> 145 </span>
<span class="t " style="left:1154px;top:1123px;color:#afafaf">145</span>
<span class="t b" style="left:888px;top:1158px;color:#afafaf">Here</span>
<span class="t i" style="left:983px;top:1158px;color:#afafaf">is</span>
<span class="t u" style="left:1040px;top:1158px;color:#afafaf">some</span>
<span class="t " style="left:1135px;top:1158px;color:#898b8b">example</span>
<span class="t " style="left:1287px;top:1158px;color:#afafaf">text</span>
<span class="t " style="left:907px;top:1228px;color:#dddddd">RGB:</span>
<span class="t " style="left:1002px;top:1228px;color:#afafaf">rgb(175, 175, 175)</span>
<span class="t " style="left:1002px;top:1263px;color:#dddddd">HEX:</span>
<span class="t " style="left:1097px;top:1263px;color:#afafaf">#afafaf</span>
<div class="r" style="left:470px;top:1333px;width:95px;height:35px;background:#ef8d8a;"></div>
<span class="t " style="left:470px;top:1333px;color:#000000"> 210</span>
<div class="r" style="left:584px;top:1333px;width:95px;height:35px;background:#cc8b89;"></div>
<span class="t " style="left:584px;top:1333px;color:#000000"> 174</span>
<div class="r" style="left:698px;top:1333px;width:95px;height:35px;background:#a98988;"></div>
<span class="t " style="left:698px;top:1333px;color:#000000"> 138</span>
<div class="r" style="left:812px;top:1333px;width:95px;height:35px;background:#878787;"></div>
<span class="t " style="left:812px;top:1333px;color:#000000"> 102</span>
<div class="r" style="left:926px;top:1333px;width:95px;height:35px;background:#688686;"></div>
<span class="t " style="left:926px;top:1333px;color:#000000"> 66</span>
<div class="r" style="left:1040px;top:1333px;width:95px;height:35px;background:#3a8586;"></div>
<span class="t " style="left:1040px;top:1333px;color:#000000"> 30</span>
<div class="r" style="left:1002px;top:1438px;width:247px;height:35px;background:#444444;"></div>
<div class="r" style="left:1021px;top:1449px;width:18px;height:18px;background:#73ad8a;clip-path:polygon(0 0,100% 0,50% 100%)"></div>
<span class="t b" style="left:1059px;top:1438px;color:#73ad8a">RGB &amp; HEX</span>
</div>
</body></html>
